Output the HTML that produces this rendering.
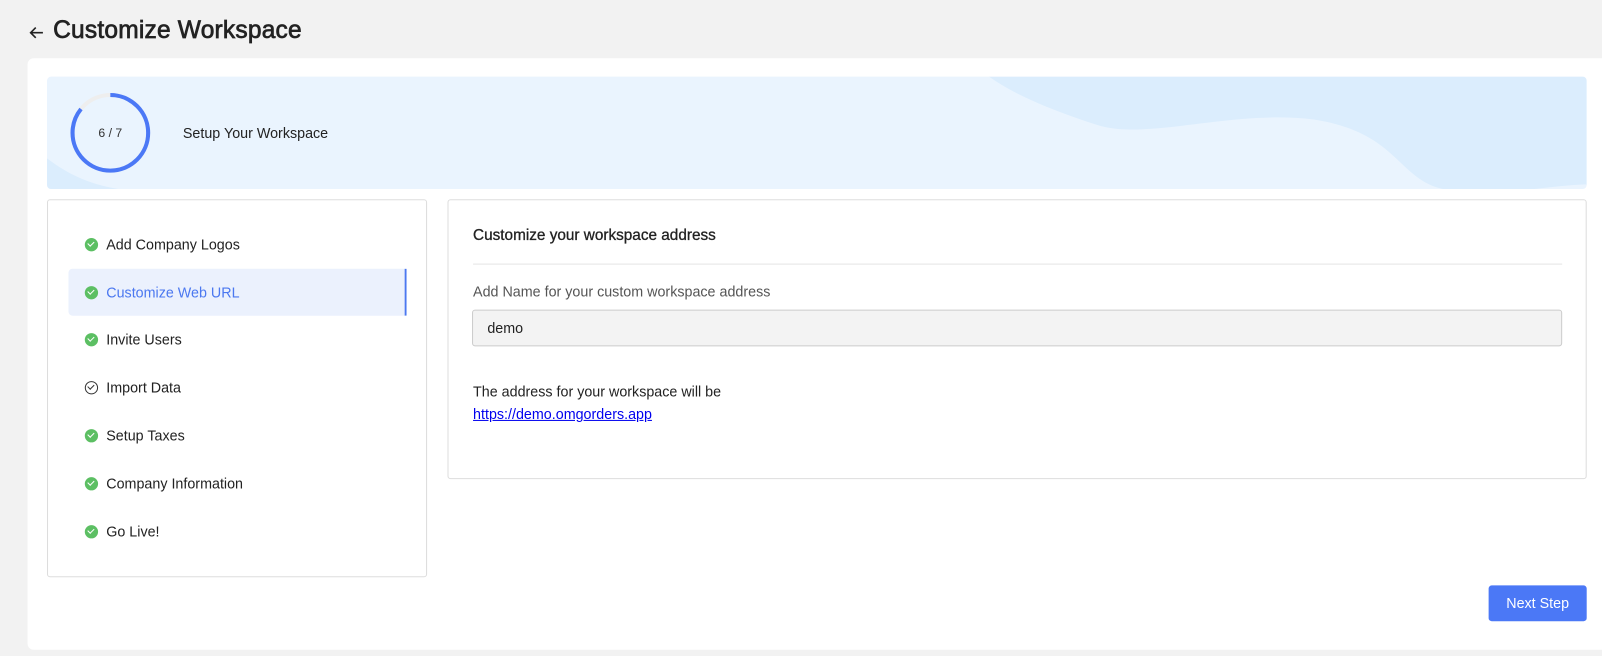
<!DOCTYPE html>
<html><head><style>
*{box-sizing:border-box;margin:0;padding:0}
body{width:1602px;height:656px;background:#f2f2f2;font-family:"Liberation Sans",sans-serif;color:#222;position:relative;overflow:hidden}
#wrap{position:absolute;left:0;top:0;width:1568px;height:642px;transform:scale(1.0217);transform-origin:0 0}
.abs{position:absolute}
h1{position:absolute;left:52px;top:16px;font-size:24px;font-weight:normal;color:#222;letter-spacing:0.2px;-webkit-text-stroke:0.7px #222}
.card{left:27px;top:57px;width:1580px;height:579px;background:#fff;border-radius:6px}
.banner{left:46px;top:75px;width:1507px;height:110px;background:#eaf4fe;border-radius:4px;overflow:hidden}
.left{left:46px;top:195px;width:372px;height:370px;border:1px solid #ddd;border-radius:3px;background:#fff}
.item{position:absolute;left:20px;width:331px;height:46px;font-size:14px;display:flex;align-items:center;padding-left:16px;color:#222}
.item .ic{width:13px;height:13px;border-radius:50%;background:#5cbf63;margin-right:8px;position:relative}
.item .ic:after{content:"";position:absolute;left:4px;top:2.5px;width:3px;height:5px;border:solid #fff;border-width:0 1.5px 1.5px 0;transform:rotate(45deg)}
.item .ic.o{background:#fff;border:1.3px solid #333}
.item .ic.o:after{border-color:#333;left:3.3px;top:1.6px}
.active{background:#ebf1fd;color:#4b78f0;border-right:2px solid #4b78f0;border-radius:4px 0 0 4px}
.right{left:438px;top:195px;width:1115px;height:274px;border:1px solid #ddd;border-radius:3px;background:#fff}
.btn{left:1457px;top:573px;width:96px;height:35px;background:#4b78f6;border-radius:3px;color:#fff;font-size:14px;text-align:center;line-height:35px}
</style></head><body><div id="wrap">
<svg class="abs" style="left:28px;top:24px" width="16" height="16" viewBox="0 0 16 16"><path d="M14 8H2M7 3L2 8l5 5" stroke="#222" stroke-width="1.6" fill="none"/></svg>
<h1>Customize Workspace</h1>
<div class="abs card"></div>
<div class="abs banner">
<svg width="1507" height="110" style="position:absolute;left:0;top:0">
<path d="M922 0 C950 20 990 35 1030 48 C1080 62 1160 32 1240 42 C1330 56 1320 108 1380 112 C1440 120 1500 95 1560 110 L1507 110 L1507 0Z" fill="#dbedfd"/>
<path d="M0 80 C20 95 40 105 70 110 L0 110Z" fill="#dbedfd"/>
</svg>
<svg style="position:absolute;left:22px;top:15px" width="80" height="80" viewBox="0 0 80 80">
<circle cx="40" cy="40" r="37" stroke="#eee" stroke-width="4" fill="none"/>
<circle cx="40" cy="40" r="37" stroke="#4b78f6" stroke-width="4" fill="none" stroke-dasharray="199.3 232.5" transform="rotate(-90 40 40)"/>
<text x="40" y="44" font-size="12" text-anchor="middle" fill="#333" font-family="Liberation Sans">6 / 7</text>
</svg>
<div style="position:absolute;left:133px;top:47px;font-size:14px;color:#222">Setup Your Workspace</div>
</div>
<div class="abs left">
<div class="item" style="top:20px"><span class="ic"></span>Add Company Logos</div>
<div class="item active" style="top:67px"><span class="ic"></span>Customize Web URL</div>
<div class="item" style="top:113px"><span class="ic"></span>Invite Users</div>
<div class="item" style="top:160px"><span class="ic o"></span>Import Data</div>
<div class="item" style="top:207px"><span class="ic"></span>Setup Taxes</div>
<div class="item" style="top:254px"><span class="ic"></span>Company Information</div>
<div class="item" style="top:301px"><span class="ic"></span>Go Live!</div>
</div>
<div class="abs right">
<div style="position:absolute;left:24px;top:26px;font-size:15px;-webkit-text-stroke:0.3px #222;color:#222">Customize your workspace address</div>
<div style="position:absolute;left:24px;top:62px;width:1066px;border-top:1px solid #e5e5e5"></div>
<div style="position:absolute;left:24px;top:81px;font-size:14px;color:#555">Add Name for your custom workspace address</div>
<div style="position:absolute;left:23px;top:107px;width:1067px;height:36px;background:#f3f3f3;border:1px solid #ccc;border-radius:3px;font-size:14px;padding:9px 14px">demo</div>
<div style="position:absolute;left:24px;top:176px;font-size:14px;color:#222;line-height:22px">The address for your workspace will be<br><span style="color:#0000ee;text-decoration:underline">https://demo.omgorders.app</span></div>
</div>
<div class="abs btn">Next Step</div>
</div></body></html>
